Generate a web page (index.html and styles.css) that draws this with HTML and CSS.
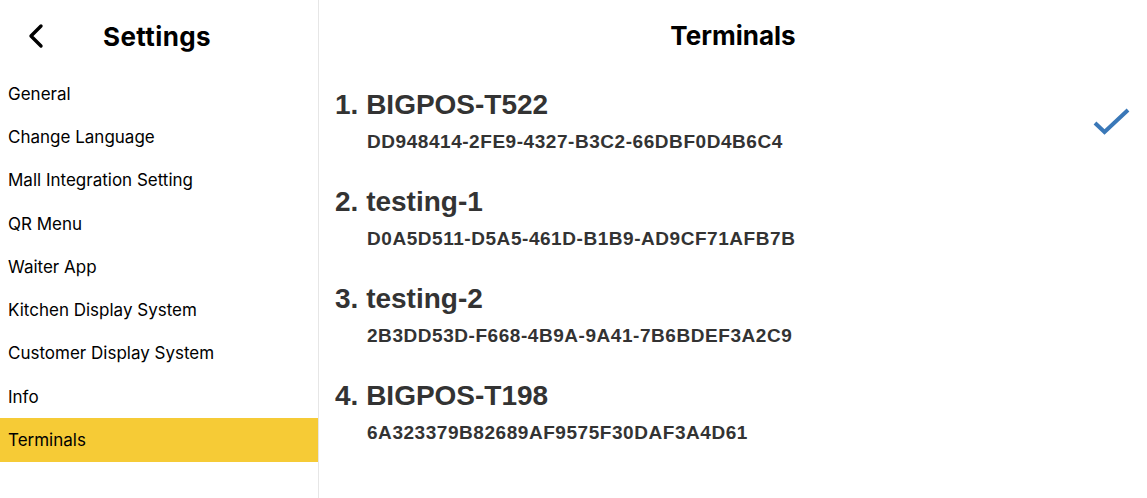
FILE: index.html
```html
<!DOCTYPE html>
<html>
<head>
<meta charset="utf-8">
<link rel="stylesheet" href="styles.css">
</head>
<body>
<div class="app">
  <aside class="sidebar">
    <header class="side-head">
      <span class="back">
        <svg width="18" height="26" viewBox="0 0 18 26"><path d="M14 3 L4 13 L14 23" fill="none" stroke="#000" stroke-width="3.4" stroke-linecap="round" stroke-linejoin="round"/></svg>
      </span>
      <h1 class="side-title">Settings</h1>
    </header>
    <nav class="menu">
      <div class="item">General</div>
      <div class="item">Change Language</div>
      <div class="item">Mall Integration Setting</div>
      <div class="item">QR Menu</div>
      <div class="item">Waiter App</div>
      <div class="item">Kitchen Display System</div>
      <div class="item">Customer Display System</div>
      <div class="item">Info</div>
      <div class="item active">Terminals</div>
    </nav>
  </aside>
  <main class="content">
    <h2 class="title">Terminals</h2>
    <ul class="terms">
      <li class="term">
        <div class="term-text">
          <div class="name">1. BIGPOS-T522</div>
          <div class="uuid">DD948414-2FE9-4327-B3C2-66DBF0D4B6C4</div>
        </div>
        <svg class="check" width="42" height="34" viewBox="0 0 42 34"><path d="M4 16 L13.5 25 L37 3" fill="none" stroke="#3a78b8" stroke-width="4" stroke-linecap="butt" stroke-linejoin="miter"/></svg>
      </li>
      <li class="term">
        <div class="term-text">
          <div class="name">2. testing-1</div>
          <div class="uuid">D0A5D511-D5A5-461D-B1B9-AD9CF71AFB7B</div>
        </div>
      </li>
      <li class="term">
        <div class="term-text">
          <div class="name">3. testing-2</div>
          <div class="uuid">2B3DD53D-F668-4B9A-9A41-7B6BDEF3A2C9</div>
        </div>
      </li>
      <li class="term">
        <div class="term-text">
          <div class="name">4. BIGPOS-T198</div>
          <div class="uuid">6A323379B82689AF9575F30DAF3A4D61</div>
        </div>
      </li>
    </ul>
  </main>
</div>
</body>
</html>
```
FILE: styles.css
```css
* { box-sizing: border-box; }
html, body { margin: 0; padding: 0; background: #fff; }
body { width: 1147px; height: 498px; overflow: hidden; font-family: "Inter", "Liberation Sans", sans-serif; }
.app { display: flex; height: 498px; }
.sidebar { width: 319px; border-right: 1px solid #e6e6e6; flex-shrink: 0; }
.side-head { display: flex; align-items: center; height: 72px; padding-left: 27px; }
.back { display: flex; width: 18px; height: 26px; }
.side-title { margin: 0 0 0 58px; font-size: 26px; font-weight: 700; color: #000; letter-spacing: 0.4px; }
.menu { display: flex; flex-direction: column; }
.item { height: 43.3px; display: flex; align-items: center; padding-left: 8px; font-size: 17px; color: #000; }
.item.active { background: #f6cb36; }
.content { flex: 1; display: flex; flex-direction: column; }
.title { margin: 0; height: 70px; display: flex; align-items: center; justify-content: center; font-size: 26px; font-weight: 700; color: #000; }
.terms { list-style: none; margin: 0; padding: 0 0 0 16px; }
.term { display: flex; align-items: flex-start; justify-content: space-between; height: 97px; padding-top: 19px; }
.term-text { display: flex; flex-direction: column; }
.name { font-family: "Liberation Sans", Arial, sans-serif; font-weight: 700; font-size: 28px; color: #333; line-height: 32px; }
.uuid { font-family: "Liberation Sans", Arial, sans-serif; font-weight: 700; font-size: 19px; letter-spacing: 0.55px; color: #333; line-height: 22px; margin-top: 10px; padding-left: 32px; }
.check { margin-right: 14px; margin-top: 18px; }
```
